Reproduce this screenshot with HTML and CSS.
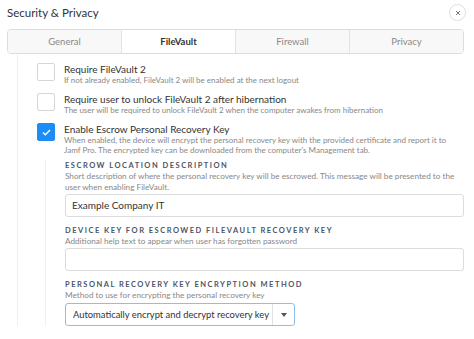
FILE: index.html
```html
<!DOCTYPE html>
<html lang="en">
  <head>
    <meta charset="UTF-8" />
    <title>Security &amp; Privacy</title>
    <link rel="stylesheet" href="styles.css">
  </head>
  <body>
    <div class="panel">
      <div class="panel-header">
        <h1 class="panel-title">Security &amp; Privacy</h1>
        <button class="close-btn" aria-label="Close">
          <svg width="6" height="6" viewBox="0 0 6 6"><path d="M1 1l4 4M5 1l-4 4" stroke="#777" stroke-width="1"/></svg>
        </button>
      </div>

      <div class="tabs">
        <div class="tab">General</div>
        <div class="tab active">FileVault</div>
        <div class="tab">Firewall</div>
        <div class="tab">Privacy</div>
      </div>

      <div class="content">
        <div class="option">
          <span class="checkbox"></span>
          <div class="option-text">
            <div class="option-label">Require FileVault 2</div>
            <div class="option-help">If not already enabled, FileVault 2 will be enabled at the next logout</div>
          </div>
        </div>

        <div class="option">
          <span class="checkbox"></span>
          <div class="option-text">
            <div class="option-label">Require user to unlock FileVault 2 after hibernation</div>
            <div class="option-help">The user will be required to unlock FileVault 2 when the computer awakes from hibernation</div>
          </div>
        </div>

        <div class="option">
          <span class="checkbox checked">
            <svg width="9" height="7" viewBox="0 0 9 7"><path d="M1 3.5l2.3 2.3L8 1" fill="none" stroke="#fff" stroke-width="1.3"/></svg>
          </span>
          <div class="option-text">
            <div class="option-label">Enable Escrow Personal Recovery Key</div>
            <div class="option-help">When enabled, the device will encrypt the personal recovery key with the provided certificate and report it to Jamf Pro. The encrypted key can be downloaded from the computer's Management tab.</div>
          </div>
        </div>

        <div class="subsection">
          <div class="field">
            <div class="field-label">Escrow Location Description</div>
            <div class="field-help">Short description of where the personal recovery key will be escrowed. This message will be presented to the user when enabling FileVault.</div>
            <div class="input">Example Company IT</div>
          </div>

          <div class="field">
            <div class="field-label">Device Key for Escrowed FileVault Recovery Key</div>
            <div class="field-help">Additional help text to appear when user has forgotten password</div>
            <div class="input"></div>
          </div>

          <div class="field">
            <div class="field-label">Personal Recovery Key Encryption Method</div>
            <div class="field-help">Method to use for encrypting the personal recovery key</div>
            <div class="select">
              <span class="select-value">Automatically encrypt and decrypt recovery key</span>
              <span class="select-caret">
                <svg width="6" height="4" viewBox="0 0 6 4"><path d="M0 0h6L3 4z" fill="#555"/></svg>
              </span>
            </div>
          </div>
        </div>
      </div>
    </div>
  </body>
</html>
```

FILE: styles.css
```css
body {
  margin: 0;
  background: #fff;
  font-family: Lato, sans-serif;
  color: #333;
  overflow: hidden;
}

.panel {
  padding: 0 10px 0 7px;
}

.panel-header {
  display: flex;
  justify-content: space-between;
  align-items: center;
  height: 25px;
}

.panel-title {
  margin: 0;
  font-size: 11.5px;
  font-weight: 400;
  color: #333;
}

.close-btn {
  width: 17px;
  height: 17px;
  padding: 0;
  border: 1px solid #ddd;
  border-radius: 50%;
  background: #fff;
  display: flex;
  align-items: center;
  justify-content: center;
  margin-right: -2px;
}

.tabs {
  display: flex;
  margin-top: 4px;
  border: 1px solid #dcdcdc;
  border-radius: 4px;
  overflow: hidden;
}

.tab {
  flex: 1;
  height: 23px;
  line-height: 23px;
  text-align: center;
  font-size: 9.5px;
  color: #888;
  background: #f8f8f8;
  border-left: 1px solid #e2e2e2;
}

.tab:first-child {
  border-left: none;
}

.tab.active {
  background: #fff;
  color: #333;
  font-weight: 700;
}

.content {
  margin-left: 10px;
  padding: 9px 0 0 19px;
  border-left: 1px solid #f0f0f0;
}

.option {
  display: flex;
  align-items: flex-start;
  margin-bottom: 8px;
}

.checkbox {
  flex: none;
  width: 16px;
  height: 16px;
  border: 1px solid #d6d6d6;
  border-radius: 2px;
  background: #fff;
  display: flex;
  align-items: center;
  justify-content: center;
}

.checkbox.checked {
  background: #1c8df7;
  border-color: #1c8df7;
}

.option-text {
  margin-left: 9px;
}

.option-label {
  font-size: 10px;
  line-height: 12px;
  color: #333;
}

.option-help {
  font-size: 8px;
  line-height: 10px;
  color: #888;
}

.subsection {
  margin-left: 8px;
  padding: 0 0 0 19px;
  border-left: 1px solid #f0f0f0;
  margin-top: -3px;
}

.field {
  margin-bottom: 8px;
}

.field-label {
  font-size: 7.5px;
  font-weight: 700;
  letter-spacing: 1.5px;
  text-transform: uppercase;
  color: #4d5566;
  line-height: 11px;
}

.field-help {
  font-size: 8.2px;
  line-height: 11px;
  color: #888;
  margin-bottom: 1px;
}

.input {
  height: 21px;
  border: 1px solid #dcdcdc;
  border-radius: 3px;
  padding: 0 6px;
  font-size: 10px;
  line-height: 21px;
  color: #333;
}

.select {
  display: inline-flex;
  align-items: center;
  height: 21px;
  border: 1px solid #8cc0ec;
  border-radius: 3px;
  font-size: 9.4px;
  color: #333;
}

.select-value {
  padding: 0 3px 0 7px;
  border-right: 1px solid #e2e2e2;
  line-height: 21px;
}

.select-caret {
  width: 21px;
  display: flex;
  justify-content: center;
}
```
